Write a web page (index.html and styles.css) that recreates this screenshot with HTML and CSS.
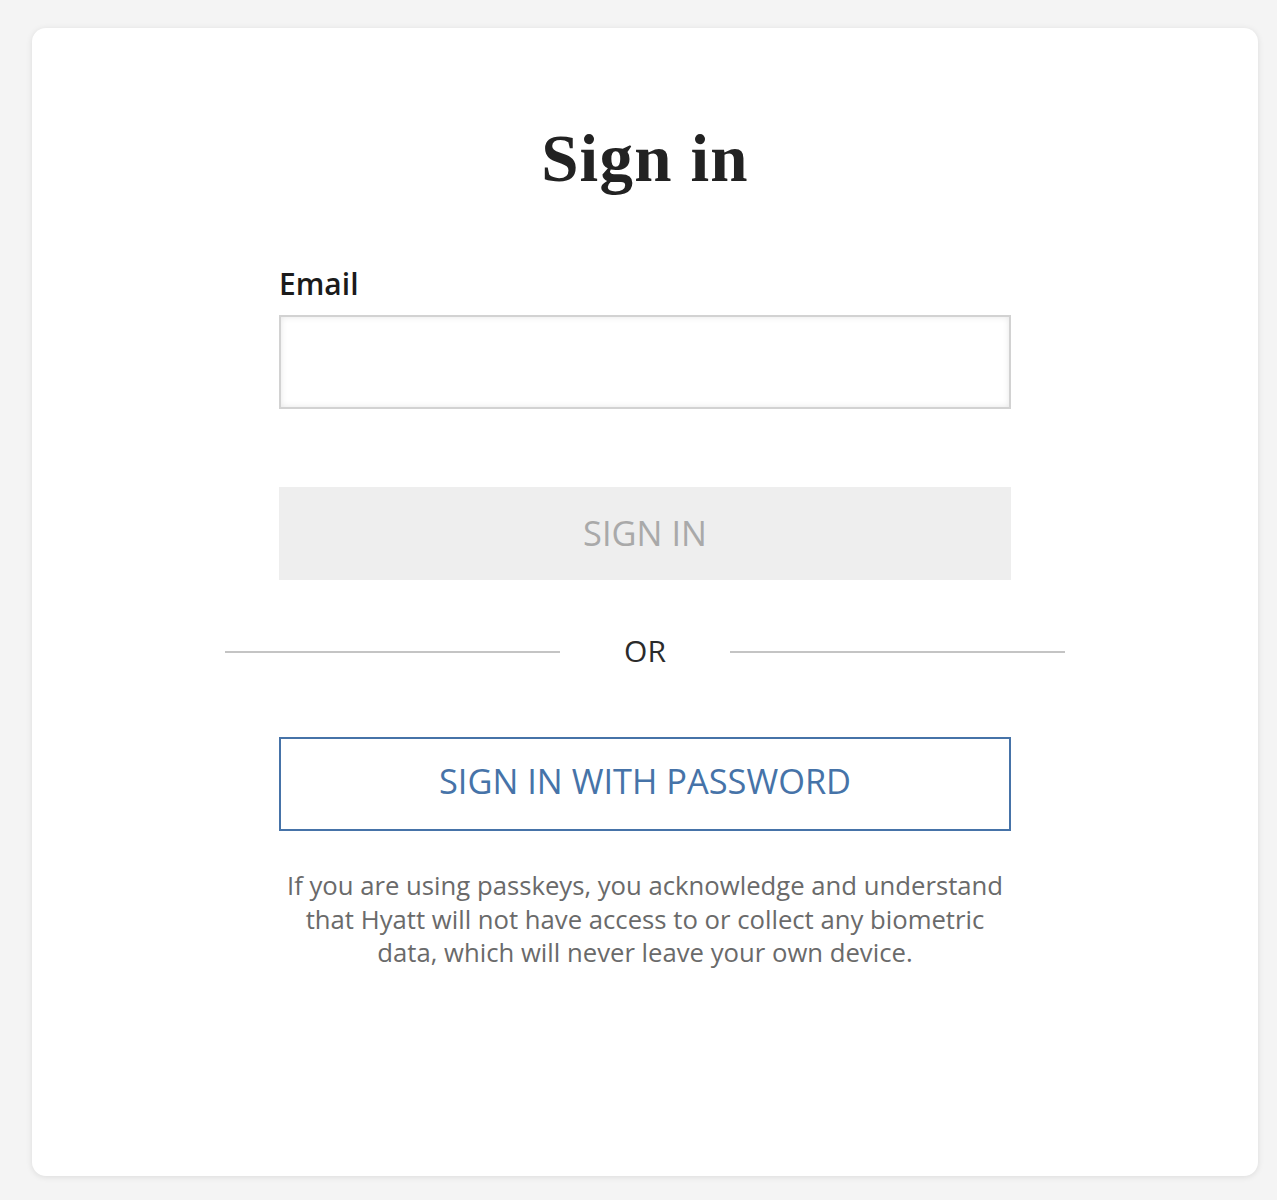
FILE: index.html
```html
<!DOCTYPE html>
<html lang="en">
<head>
<meta charset="utf-8">
<title>Sign in</title>
<link rel="stylesheet" href="styles.css">
</head>
<body>
<main class="card">
  <h1 class="title">Sign in</h1>
  <form class="form">
    <label class="label" for="email">Email</label>
    <input class="input" id="email" type="email">
    <button class="btn-primary" type="button" disabled>SIGN IN</button>
  </form>
  <div class="divider"><span class="line"></span><span class="or">OR</span><span class="line"></span></div>
  <div class="form">
    <button class="btn-outline" type="button">SIGN IN WITH PASSWORD</button>
    <p class="note">If you are using passkeys, you acknowledge and understand that Hyatt will not have access to or collect any biometric data, which will never leave your own device.</p>
  </div>
</main>
</body>
</html>
```
FILE: styles.css
```css
html, body {
  margin: 0;
  padding: 0;
  background: #f4f4f4;
}
body {
  font-family: "Open Sans", "Liberation Sans", sans-serif;
  padding: 28px 19px 24px 32px;
}
.card {
  box-sizing: border-box;
  width: 1226px;
  height: 1148px;
  background: #fff;
  border-radius: 14px;
  box-shadow: 0 1px 6px rgba(0,0,0,0.10);
  padding-top: 90px;
  display: flex;
  flex-direction: column;
  align-items: center;
}
.title {
  margin: 0;
  font-family: "Liberation Serif", "DejaVu Serif", serif;
  font-weight: 700;
  font-size: 67px;
  line-height: 80px;
  color: #222;
  letter-spacing: 1.2px;
}
.form {
  width: 732px;
  display: flex;
  flex-direction: column;
}
.label {
  margin-top: 66px;
  font-size: 30px;
  line-height: 40px;
  font-weight: 600;
  color: #1b1b1b;
  font-stretch: 90%;
}
.input {
  box-sizing: border-box;
  margin-top: 11px;
  height: 94px;
  width: 732px;
  border: 2px solid #d2d2d2;
  box-shadow: inset 0 0 6px rgba(0,0,0,0.10);
  background: #fff;
  outline: none;
  font-size: 28px;
}
.btn-primary {
  box-sizing: border-box;
  margin-top: 78px;
  height: 93px;
  width: 732px;
  border: none;
  background: #eeeeee;
  color: #a9a9a9;
  font-family: inherit;
  font-size: 34.4px;
  font-weight: 400;
  padding: 0 0 2px;
}
.divider {
  margin-top: 50px;
  width: 840px;
  height: 40px;
  display: flex;
  align-items: center;
}
.line {
  flex: 1;
  height: 2px;
  margin-top: 4px;
  background: #c4c4c4;
}
.or {
  width: 170px;
  text-align: center;
  font-size: 30px;
  color: #2b2b2b;
}
.btn-outline {
  box-sizing: border-box;
  margin-top: 67px;
  height: 94px;
  width: 732px;
  border: 2px solid #4673a8;
  background: #fff;
  color: #4673a8;
  font-family: inherit;
  font-size: 34.4px;
  font-weight: 400;
  padding: 0 0 8px;
}
.note {
  margin: 38px 0 0;
  text-align: center;
  font-size: 25.7px;
  line-height: 33.5px;
  font-stretch: 88%;
  color: #6a6a6a;
  padding: 0;
}
```
